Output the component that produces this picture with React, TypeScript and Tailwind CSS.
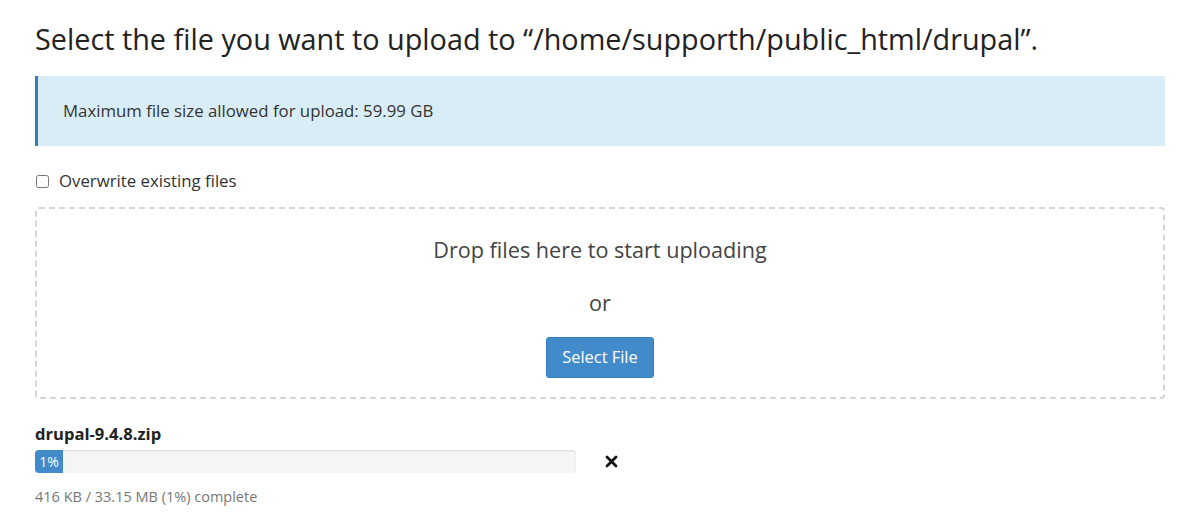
import React from "react";

export default function App() {
  return (
    <div
      className="min-h-[526px] bg-white px-[35px] pt-[19px] text-[#333]"
      style={{ fontFamily: '"Open Sans", sans-serif' }}
    >
      <h1 className="text-[28.8px] leading-[40px] text-[#222]">
        Select the file you want to upload to “/home/supporth/public_html/drupal”.
      </h1>

      <div className="mt-[17px] flex h-[70px] items-center border-l-[3px] border-[#3d7ab8] bg-[#d9edf7] pl-[25px] text-[16.8px] text-[#333]">
        Maximum file size allowed for upload: 59.99 GB
      </div>

      <label className="mt-[24px] flex items-center gap-[10px] text-[16.8px] leading-[22px]">
        <input type="checkbox" className="ml-[1px] h-[13px] w-[13px]" />
        <span>Overwrite existing files</span>
      </label>

      <div className="mt-[15px] flex h-[192px] flex-col items-center rounded-[4px] border-2 border-dashed border-[#d5d5d5] pt-[23px]">
        <div className="text-[21.6px] leading-[36px] text-[#444]">
          Drop files here to start uploading
        </div>
        <div className="mt-[17px] text-[21.6px] leading-[36px] text-[#444]">or</div>
        <button className="mt-[16px] h-[41px] w-[108px] rounded-[3px] border border-[#357ebd] bg-[#428bca] text-[16.4px] text-white">
          Select File
        </button>
      </div>

      <div className="mt-[24px] text-[16.6px] font-bold leading-[22px] text-[#222]">
        drupal-9.4.8.zip
      </div>
      <div className="mt-[5px] flex items-center">
        <div className="flex h-[23px] w-[541px] overflow-hidden rounded-[4px] bg-[#f5f5f5] shadow-[inset_0_1px_2px_rgba(0,0,0,0.1)]">
          <div className="flex w-[28px] items-center justify-center bg-[#428bca] text-[14px] text-white">
            1%
          </div>
        </div>
        <svg className="ml-[29px]" width="13" height="13" viewBox="0 0 13 13">
          <path
            d="M2 2 L11 11 M11 2 L2 11"
            stroke="#111"
            strokeWidth="2.8"
            strokeLinecap="round"
          />
        </svg>
      </div>
      <div className="mt-[14px] text-[14.5px] leading-[20px] text-[#777]">
        416 KB / 33.15 MB (1%) complete
      </div>
    </div>
  );
}
